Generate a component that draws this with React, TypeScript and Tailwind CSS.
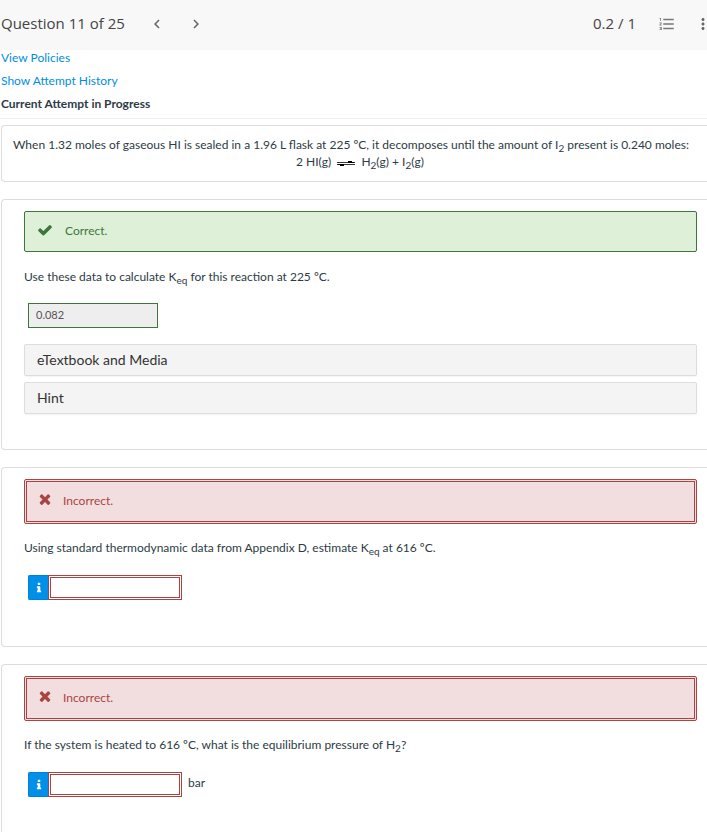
import type { ReactNode } from 'react';
import { MdChevronLeft, MdChevronRight, MdFormatListNumbered, MdMoreVert } from 'react-icons/md';

const ICONS = {
  check:
    'M1671 566q0 40-28 68l-724 724-136 136q-28 28-68 28t-68-28l-136-136-362-362q-28-28-28-68t28-68l136-136q28-28 68-28t68 28l294 295 656-657q28-28 68-28t68 28l136 136q28 28 28 68z',
  times:
    'M1490 1322q0 40-28 68l-136 136q-28 28-68 28t-68-28l-294-294-294 294q-28 28-68 28t-68-28l-136-136q-28-28-28-68t28-68l294-294-294-294q-28-28-28-68t28-68l136-136q28-28 68-28t68 28l294 294 294-294q28-28 68-28t68 28l136 136q28 28 28 68t-28 68l-294 294 294 294q28 28 28 68z',
  info: 'M1216 1344v128q0 26-19 45t-45 19h-512q-26 0-45-19t-19-45v-128q0-26 19-45t45-19h64v-384h-64q-26 0-45-19t-19-45v-128q0-26 19-45t45-19h384q26 0 45 19t19 45v576h64q26 0 45 19t19 45zm-128-1152v192q0 26-19 45t-45 19h-256q-26 0-45-19t-19-45v-192q0-26 19-45t45-19h256q26 0 45 19t19 45z',
};

const Icon = ({ name, className }: { name: keyof typeof ICONS; className: string }) => (
  <svg viewBox="0 0 1792 1792" fill="currentColor" aria-hidden="true" className={className}>
    <path d={ICONS[name]} />
  </svg>
);

// Subscript that does not change the line height
const Sub = ({ children }: { children: ReactNode }) => (
  <sub className="text-[10px] leading-none">{children}</sub>
);

const Equilibrium = () => (
  <svg viewBox="0 0 20 8" className="mx-[2px] inline h-2 w-5" role="img" aria-label="is in equilibrium with">
    <path d="M1 3.5h18M1 5.5h18" stroke="#333" strokeWidth="1" fill="none" />
    <path d="M12 2h4v1h2v1h-6zM8 7H4V6H2V5h6z" fill="#000" />
  </svg>
);

const Panel = ({ className, children }: { className: string; children: ReactNode }) => (
  <section className={`ml-px rounded-l border-l border-t border-[#ddd] ${className}`}>{children}</section>
);

const Correct = () => (
  <div className="flex h-[41px] items-center gap-3 rounded-xs border border-[#3c763d] bg-[#dff0d8] px-3 pb-[2px] text-[#3c763d]">
    <Icon name="check" className="mb-px size-4" />
    <span>Correct.</span>
  </div>
);

const Incorrect = () => (
  <div className="flex h-[45px] items-center gap-[10px] rounded-xs border-3 border-double border-[#a94442] bg-[#f2dede] px-[10px] pb-[2px] text-[#a94442]">
    <Icon name="times" className="mb-[3px] size-4" />
    <span>Incorrect.</span>
  </div>
);

const Drawer = ({ title }: { title: string }) => (
  <button
    type="button"
    className="block h-8 w-full cursor-pointer rounded-xs border border-[#ddd] bg-[#f4f4f4] px-3 text-left text-sm text-[#333] shadow-xs"
  >
    {title}
  </button>
);

const AnswerField = ({ label, unit }: { label: string; unit?: string }) => (
  <div className="ml-1 mt-[19px] flex h-[25px]">
    <button
      type="button"
      aria-label="Answer information"
      className="flex w-5 cursor-pointer items-center justify-center rounded-l-xs border border-r-0 border-[#0080d8] bg-[#0090e9] text-white"
    >
      <Icon name="info" className="size-3" />
    </button>
    <input
      type="text"
      aria-label={label}
      className="w-[134px] border-3 border-double border-[#a94442] bg-white px-2 text-xs text-[#555] outline-none"
    />
    {unit && <span className="ml-[6px] mt-[2px]">{unit}</span>}
  </div>
);

const Header = () => (
  <header className="flex h-[50px] items-center bg-[#f8f8f8] pb-[3px] pl-px font-['Open_Sans',sans-serif] text-[15px] text-[#444]">
    <h1>Question 11 of 25</h1>
    <nav className="ml-[23px] flex gap-[21px] text-[#666]">
      <button type="button" aria-label="Previous question" className="cursor-pointer">
        <MdChevronLeft size={18} />
      </button>
      <button type="button" aria-label="Next question" className="cursor-pointer">
        <MdChevronRight size={18} />
      </button>
    </nav>
    <span className="ml-auto">0.2 / 1</span>
    <button type="button" aria-label="Question list" className="ml-[22px] cursor-pointer text-[#777]">
      <MdFormatListNumbered size={18} />
    </button>
    <button type="button" aria-label="More options" className="-mr-[5px] ml-[18px] cursor-pointer text-[#666]">
      <MdMoreVert size={18} />
    </button>
  </header>
);

const App = () => (
  <div className="flex min-h-screen flex-col overflow-x-hidden bg-white font-['Lato',sans-serif] text-xs leading-[17px] text-[#2d3b45]">
    <Header />

    <div className="flex flex-col items-start gap-2 border-b border-[#eee] pb-[7px] pl-px leading-[15px]">
      <a href="#policies" className="text-[#008ee2]">
        View Policies
      </a>
      <a href="#history" className="text-[#008ee2]">
        Show Attempt History
      </a>
      <p className="font-bold">Current Attempt in Progress</p>
    </div>

    <main className="mt-[6px] flex flex-1 flex-col gap-[17px]">
      <Panel className="border-b pb-[11px] pl-[11px] pt-[10px]">
        <p>
          When 1.32 moles of gaseous HI is sealed in a 1.96 L flask at 225 ºC, it decomposes until the amount of I
          <Sub>2</Sub> present is 0.240 moles:
        </p>
        <p className="text-center">
          2 HI(g) <Equilibrium /> H<Sub>2</Sub>(g) + I<Sub>2</Sub>(g)
        </p>
      </Panel>

      <Panel className="border-b pb-[35px] pl-[22px] pr-[10px] pt-[11px]">
        <Correct />
        <p className="mt-4">
          Use these data to calculate K<Sub>eq</Sub> for this reaction at 225 ºC.
        </p>
        <input
          type="text"
          aria-label="Equilibrium constant at 225 ºC"
          readOnly
          value="0.082"
          className="ml-1 mt-[18px] block h-[25px] w-[130px] border border-[#3c763d] bg-[#eee] px-[7px] pb-[2px] text-[11px] text-[#555] outline-none"
        />
        <div className="mt-4 flex flex-col gap-[6px]">
          <Drawer title="eTextbook and Media" />
          <Drawer title="Hint" />
        </div>
      </Panel>

      <Panel className="border-b pb-[46px] pl-[22px] pr-[10px] pt-[11px]">
        <Incorrect />
        <p className="mt-[15px]">
          Using standard thermodynamic data from Appendix D, estimate K<Sub>eq</Sub> at 616 ºC.
        </p>
        <AnswerField label="Equilibrium constant at 616 ºC" />
      </Panel>

      <Panel className="flex-1 rounded-bl-none pl-[22px] pr-[10px] pt-[11px]">
        <Incorrect />
        <p className="mt-[15px]">
          If the system is heated to 616 ºC, what is the equilibrium pressure of H<Sub>2</Sub>?
        </p>
        <AnswerField label="Equilibrium pressure of hydrogen" unit="bar" />
      </Panel>
    </main>
  </div>
);

export default App;
